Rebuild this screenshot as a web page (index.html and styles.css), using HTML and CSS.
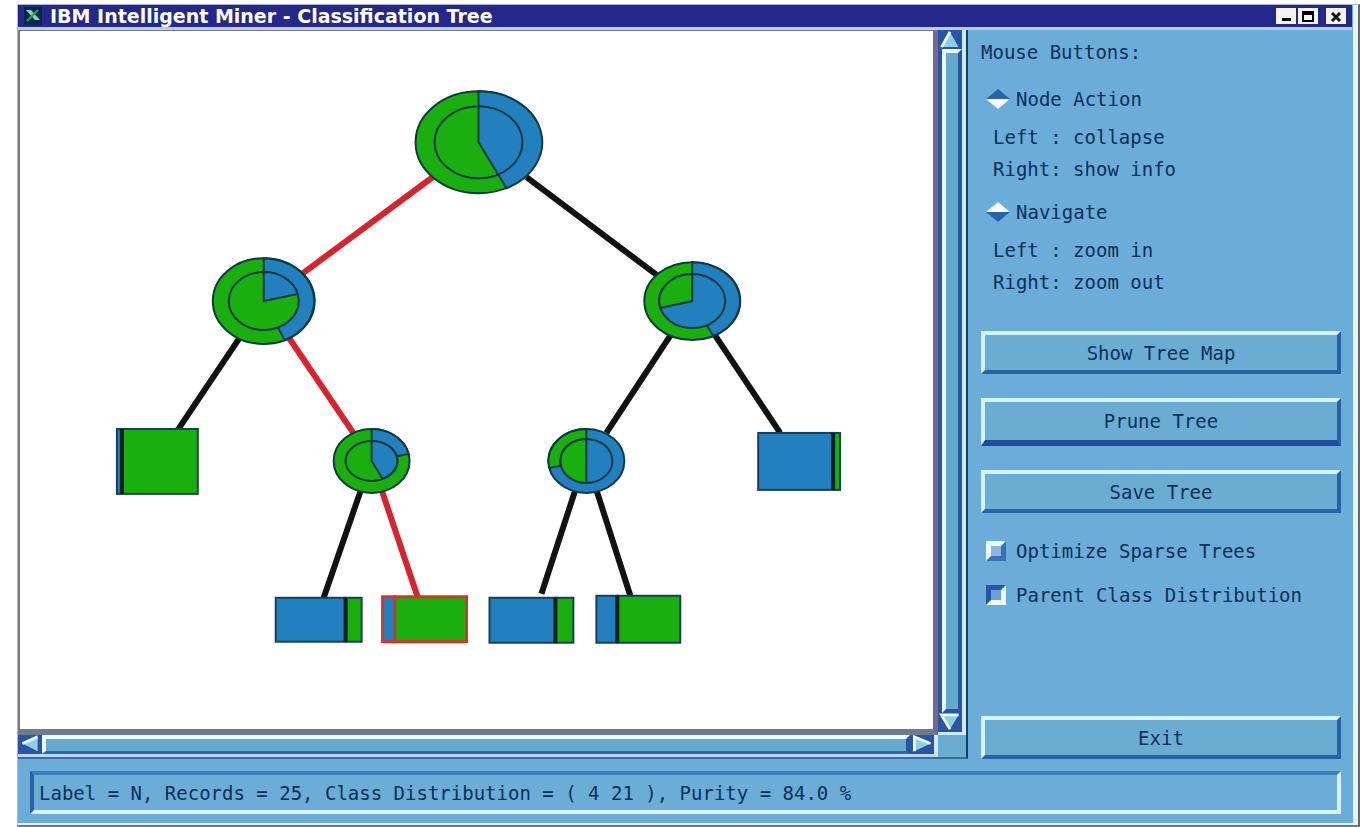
FILE: index.html
```html
<!DOCTYPE html>
<html lang="en">
<head>
    <meta charset="UTF-8">
    <meta name="viewport" content="width=device-width, initial-scale=1.0">
    <title>IBM Intelligent Miner - Classification Tree</title>
    <link rel="stylesheet" href="styles.css">
</head>
<body>
    <div class="window">
        <header class="title-bar">
            <svg class="app-icon" viewBox="0 0 18 18" aria-hidden="true">
                <rect width="18" height="18" fill="#06264a"/>
                <path d="M2 3h5l9 10h-5z" fill="#7be0a8"/>
                <path d="M14 3L3 14" stroke="#2f9c66" stroke-width="2"/>
            </svg>
            <h1>IBM Intelligent Miner - Classification Tree</h1>
            <div class="window-buttons">
                <button type="button" aria-label="Minimize"><svg viewBox="0 0 20 16"><path d="M6 10h9v3H6z"/></svg></button>
                <button type="button" aria-label="Maximize"><svg viewBox="0 0 20 16"><path d="M4 3h12v11H4zM6 7v5h8V7z" fill-rule="evenodd"/></svg></button>
                <button type="button" aria-label="Close" class="close"><svg viewBox="0 0 20 16"><path d="M6 5l8 8M14 5l-8 8" stroke="#111" stroke-width="3"/></svg></button>
            </div>
        </header>

        <main class="main">
            <div class="viewer">
                <div class="canvas">
                    <svg class="tree" viewBox="20 31 914 698" role="img" aria-label="Classification tree">
                        <!-- branches -->
                        <g class="branch">
                            <path d="M527 177L659 276"/>
                            <path d="M241 336L178 430"/>
                            <path d="M672 334L607 433"/>
                            <path d="M715 334L781 433"/>
                            <path d="M361 491L324 598"/>
                            <path d="M576 490L542 594"/>
                            <path d="M597 490L631 596"/>
                        </g>
                        <g class="branch selected">
                            <path d="M433 177L302 274"/>
                            <path d="M288 336L355 435"/>
                            <path d="M382 490L418 597"/>
                        </g>

                        <!-- root -->
                        <g class="node">
                            <ellipse class="green" cx="479" cy="142" rx="63" ry="51"/>
                            <path class="blue" d="M479 142V91A63 51 0 0 1 507 188Z"/>
                            <ellipse class="ring" cx="479" cy="142" rx="44" ry="36"/>
                        </g>
                        <!-- level 1 -->
                        <g class="node">
                            <ellipse class="green" cx="264" cy="301" rx="51" ry="43"/>
                            <path class="blue" d="M264 301V258A51 43 0 0 1 285 340Z"/>
                            <ellipse class="green" cx="264" cy="301" rx="35" ry="29"/>
                            <path class="blue" d="M264 301V272A35 29 0 0 1 298 294Z"/>
                        </g>
                        <g class="node">
                            <ellipse class="green" cx="693" cy="301" rx="48" ry="39"/>
                            <path class="blue" d="M693 301V262A48 39 0 0 1 714 336Z"/>
                            <ellipse class="blue" cx="693" cy="301" rx="33" ry="27"/>
                            <path class="green" d="M693 301V274A33 27 0 0 0 661 308Z"/>
                        </g>
                        <!-- level 2 -->
                        <g class="node">
                            <ellipse class="green" cx="372" cy="461" rx="38" ry="32"/>
                            <path class="blue" d="M372 461V429A38 32 0 0 1 409 454Z"/>
                            <ellipse class="green" cx="372" cy="461" rx="26" ry="20"/>
                            <path class="blue" d="M372 461V441A26 20 0 0 1 383 479Z"/>
                        </g>
                        <g class="node">
                            <ellipse class="blue" cx="587" cy="461" rx="38" ry="32"/>
                            <path class="green" d="M587 461V429A38 32 0 0 0 550 468Z"/>
                            <ellipse class="blue" cx="587" cy="461" rx="26" ry="22"/>
                            <path class="green" d="M587 461V439A26 22 0 0 0 587 483Z"/>
                        </g>

                        <!-- leaves -->
                        <g class="leaf">
                            <rect class="blue" x="117" y="429" width="5" height="65"/>
                            <rect class="green" x="122" y="429" width="76" height="65"/>
                            <path class="split" d="M122 429v65"/>
                        </g>
                        <g class="leaf">
                            <rect class="blue" x="759" y="433" width="75" height="57"/>
                            <rect class="green" x="834" y="433" width="7" height="57"/>
                            <path class="split" d="M834 433v57"/>
                        </g>
                        <g class="leaf">
                            <rect class="blue" x="276" y="598" width="70" height="44"/>
                            <rect class="green" x="346" y="598" width="16" height="44"/>
                            <path class="split" d="M346 598v44"/>
                        </g>
                        <g class="leaf selected">
                            <rect class="blue" x="383" y="597" width="12" height="45"/>
                            <rect class="green" x="395" y="597" width="72" height="45"/>
                            <path class="split" d="M395 597v45"/>
                        </g>
                        <g class="leaf">
                            <rect class="blue" x="490" y="598" width="66" height="45"/>
                            <rect class="green" x="556" y="598" width="18" height="45"/>
                            <path class="split" d="M556 598v45"/>
                        </g>
                        <g class="leaf">
                            <rect class="blue" x="597" y="596" width="21" height="47"/>
                            <rect class="green" x="618" y="596" width="63" height="47"/>
                            <path class="split" d="M618 596v47"/>
                        </g>
                    </svg>
                </div>
                <div class="scrollbar vertical">
                    <button type="button" aria-label="Scroll up"><svg viewBox="0 0 24 20"><path d="M12 2L3 18h18z" fill="#8fcfe6"/><path d="M12 2L3 18" stroke="#e8fbff" stroke-width="3"/></svg></button>
                    <div class="thumb"></div>
                    <button type="button" aria-label="Scroll down"><svg viewBox="0 0 24 20"><path d="M3 2h18l-9 15z" fill="#8fcfe6"/><path d="M21 2H3l9 15" fill="none" stroke="#e8fbff" stroke-width="3"/></svg></button>
                </div>
                <div class="scrollbar horizontal">
                    <button type="button" aria-label="Scroll left"><svg viewBox="0 0 24 20"><path d="M4 9L20 2v15z" fill="#8fcfe6"/><path d="M4 9L20 2" stroke="#e8fbff" stroke-width="3"/></svg></button>
                    <div class="thumb"></div>
                    <button type="button" aria-label="Scroll right"><svg viewBox="0 0 24 20"><path d="M4 2v15l17-8z" fill="#8fcfe6"/><path d="M4 17V2l17 7" fill="none" stroke="#e8fbff" stroke-width="3"/></svg></button>
                </div>
                <div class="corner"></div>
            </div>

            <aside class="panel">
                <h2>Mouse Buttons:</h2>
                <label class="option"><input type="radio" name="mouse" checked>Node Action</label>
                <div class="hints">
                    <p>Left : collapse</p>
                    <p>Right: show info</p>
                </div>
                <label class="option"><input type="radio" name="mouse">Navigate</label>
                <div class="hints">
                    <p>Left : zoom in</p>
                    <p>Right: zoom out</p>
                </div>
                <div class="actions">
                    <button type="button" class="btn">Show Tree Map</button>
                    <button type="button" class="btn btn-default">Prune Tree</button>
                    <button type="button" class="btn">Save Tree</button>
                </div>
                <div class="checks">
                    <label class="option"><input type="checkbox">Optimize Sparse Trees</label>
                    <label class="option"><input type="checkbox" checked>Parent Class Distribution</label>
                </div>
                <button type="button" class="btn exit">Exit</button>
            </aside>
        </main>

        <footer class="status">
            <input type="text" readonly aria-label="Node information" value="Label = N, Records = 25, Class Distribution = ( 4 21 ), Purity = 84.0 %">
        </footer>
    </div>
</body>
</html>
```
FILE: styles.css
```css
* {
    margin: 0;
    padding: 0;
    box-sizing: border-box;
}

body {
    height: 100vh;
    padding: 4px 8px 0 17px;
    background: #fff;
    font-family: 'DejaVu Sans Mono', 'Liberation Mono', monospace;
    font-size: 19px;
    line-height: 32px;
    color: #0a2f58;
}

button, input {
    font: inherit;
    color: inherit;
}

.window {
    display: flex;
    flex-direction: column;
    height: 100%;
    border: 1px solid #a9b4d8;
    border-right: 2px solid #666;
    border-bottom: 2px solid #777;
    box-shadow: inset -5px -2px 0 #e6f4fb;
    padding: 0 6px 2px 0;
    background: #6badd8;
}

/* Title bar */
.title-bar {
    display: flex;
    align-items: center;
    height: 25px;
    padding: 0 6px 0 6px;
    background: #24288a;
    border-bottom: 3px solid #b4cdf0;
}

.app-icon {
    width: 18px;
    height: 18px;
    margin-right: 8px;
}

.title-bar h1 {
    flex: 1;
    font-family: 'DejaVu Sans', Verdana, sans-serif;
    font-size: 19px;
    line-height: 22px;
    color: #fff;
    white-space: nowrap;
}

.window-buttons {
    display: flex;
    gap: 2px;
}

.window-buttons button {
    width: 20px;
    height: 16px;
    border: none;
    background: #f4f4f6;
}

.window-buttons .close {
    margin-left: 6px;
}

.window-buttons svg, .scrollbar svg {
    display: block;
    width: 100%;
    height: 100%;
}

/* Tree viewer */
.main {
    flex: 1;
    display: flex;
    min-height: 0;
}

.viewer {
    flex: 1;
    display: grid;
    grid-template-columns: 1fr 28px;
    grid-template-rows: 1fr 22px;
    min-width: 0;
    border-right: 2px solid #17405c;
    border-bottom: 2px solid #3a6d9c;
}

.canvas {
    min-width: 0;
    min-height: 0;
    background: #fff;
    border: 2px solid #777a84;
    border-top-width: 1px;
    border-right: 5px solid #716a8e;
    border-bottom: 6px solid #6b7c90;
}

.tree {
    display: block;
    width: 100%;
    height: 100%;
}

.green {
    fill: #1aae0e;
}

.blue {
    fill: #2280be;
}

.branch path {
    stroke: #111;
    stroke-width: 6;
}

.branch.selected path {
    stroke: #d8222c;
}

.node ellipse, .node path {
    stroke: #0c3a40;
    stroke-width: 2;
}

.node .ring {
    fill: none;
}

.leaf rect {
    stroke: #17405c;
    stroke-width: 2;
}

.leaf .split {
    stroke: #08201e;
    stroke-width: 4;
}

.leaf.selected rect, .leaf.selected .split {
    stroke: #d8322c;
    stroke-width: 3;
}

/* Scroll bars */
.scrollbar {
    display: flex;
    background: #2a55a5;
}

.scrollbar button {
    flex: none;
    width: 24px;
    height: 19px;
    border: none;
    background: #2a55a5;
}

.scrollbar .thumb {
    flex: 1;
    background: #64aacb;
    border: 4px solid #e8fbff;
}

.vertical {
    flex-direction: column;
    border-right: 4px solid #cfeaf8;
    border-bottom: 3px solid #cfeaf8;
}

.vertical .thumb {
    margin-left: 4px;
    border-right-color: #2a55a5;
    border-bottom-color: #2a55a5;
}

.horizontal {
    border-right: 4px solid #cfeaf8;
    border-bottom: 3px solid #b9d6f6;
}

.horizontal .thumb {
    border-right-color: #2a55a5;
    border-bottom: 3px solid #2a66a8;
}

.corner {
    background: #6badd0;
}

/* Control panel */
.panel {
    flex: none;
    display: flex;
    flex-direction: column;
    width: 384px;
    padding: 6px 11px 0 13px;
}

.panel h2 {
    font-size: 19px;
    font-weight: normal;
    margin-bottom: 15px;
}

.option {
    display: flex;
    align-items: center;
    padding-left: 5px;
    white-space: nowrap;
}

.option input {
    appearance: none;
    flex: none;
    height: 20px;
}

.option input[type="radio"] {
    width: 24px;
    margin-right: 6px;
    clip-path: polygon(0 50%, 50% 0, 100% 50%, 50% 100%);
    background: linear-gradient(#f4fbff 50%, #2a62a8 50%);
}

.option input[type="radio"]:checked {
    background: linear-gradient(#2a62a8 50%, #f4fbff 50%);
}

.option input[type="checkbox"] {
    width: 20px;
    margin-right: 10px;
    border: 5px solid;
    border-color: #e8fbff #3a72b8 #3a72b8 #e8fbff;
    background: #8db4e0;
}

.option input[type="checkbox"]:checked {
    border-color: #2458a4 #f0fbff #f0fbff #2458a4;
    background: #6c9ed8;
}

.hints {
    padding: 6px 0 11px 12px;
}

.actions {
    display: flex;
    flex-direction: column;
    gap: 24px;
    padding-top: 22px;
}

.btn {
    width: 100%;
    height: 43px;
    border: 4px solid;
    border-color: #d4f3fd #2a62a8 #2a62a8 #d4f3fd;
    background: #6badd2;
    line-height: 30px;
}

.btn-default {
    height: 48px;
    border-bottom: 6px solid #1f4c98;
}

.checks {
    display: flex;
    flex-direction: column;
    gap: 12px;
    padding-top: 22px;
}

.exit {
    margin-top: auto;
}

/* Status line */
.status {
    padding: 12px 11px 9px 12px;
}

.status input {
    display: block;
    width: 100%;
    height: 43px;
    padding-left: 5px;
    border: 4px solid;
    border-color: #3a7fb6 #d4f3fd #d4f3fd #2a62a8;
    background: #6badd6;
}
```
